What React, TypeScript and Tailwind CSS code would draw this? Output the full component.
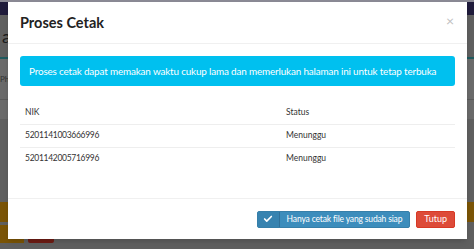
import { Check } from "lucide-react";

const rows = [
  { nik: "5201141003666996", status: "Menunggu" },
  { nik: "5201142005716996", status: "Menunggu" },
];

function BackgroundPage() {
  return (
    <div className="flex h-[249px] w-[474px] flex-col bg-[#5f5f5f]">
      <div className="h-[2px] bg-[#8a8994]" />
      <div className="h-[13px] bg-[#1f1b3b]" />
      <div className="flex h-[42px] items-center px-[2px] text-[18px] text-[#1c1c1c]">a</div>
      <div className="h-[2px] bg-[#1f5a5e]" />
      <div className="flex h-[60px] flex-col bg-[#6a6a6a]">
        <div className="flex h-[40px] items-center text-[8px] text-[#333]">Ph</div>
        <div className="h-px bg-[#5a5a5a]" />
      </div>
      <div className="flex-1" />
      <div className="flex h-[20px] bg-[#7a5406]" />
      <div className="h-[3px]" />
      <div className="flex h-[18px] gap-[4px]">
        <div className="w-[24px] bg-[#7a5406]" />
        <div className="w-[26px] rounded-[2px] bg-[#6e1c14]" />
      </div>
      <div className="h-[6px]" />
    </div>
  );
}

export default function App() {
  return (
    <div className="relative h-[249px] w-[474px] overflow-hidden" style={{ fontFamily: "Lato, 'Open Sans', sans-serif" }}>
      <BackgroundPage />
      <div className="absolute left-[8px] top-[2px] flex h-[237px] w-[459px] flex-col bg-white shadow-md">
        <div className="flex h-[42px] items-center justify-between border-b border-[#f0f0f0] pl-[12px] pr-[13px]">
          <h4 className="text-[14.5px] font-bold text-[#222]">Proses Cetak</h4>
          <span className="mt-[-4px] text-[14px] leading-none text-[#c0c0c0]">×</span>
        </div>
        <div className="flex-1 px-[12px] pt-[12px]">
          <div className="flex h-[30px] items-center whitespace-nowrap rounded-[3px] bg-[#00c0ef] px-[9px] text-[9.9px] tracking-[-0.15px] text-white">
            Proses cetak dapat memakan waktu cukup lama dan memerlukan halaman ini untuk tetap terbuka
          </div>
          <table className="mt-[15px] w-full text-[8.5px] text-[#333]">
            <thead>
              <tr className="h-[23px] border-b border-[#eee]">
                <th className="pl-[5px] text-left font-normal">NIK</th>
                <th className="w-[169px] text-left font-normal">Status</th>
              </tr>
            </thead>
            <tbody>
              {rows.map((r, i) => (
                <tr key={r.nik} className={`h-[23px] ${i === 0 ? "border-b border-[#eee]" : ""}`}>
                  <td className="pl-[5px] tracking-[-0.3px]">{r.nik}</td>
                  <td>{r.status}</td>
                </tr>
              ))}
            </tbody>
          </table>
        </div>
        <div className="flex h-[41px] items-center justify-end gap-[6px] border-t border-[#f0f0f0] pr-[12px]">
          <button className="flex h-[17px] items-stretch overflow-hidden rounded-[2px] border border-[#367fa9] bg-[#3c8dbc] text-[8.5px] tracking-[-0.15px] text-white">
            <span className="flex w-[22px] items-center justify-center border-r border-[#2f7099] bg-[#3783b0]">
              <Check size={10} strokeWidth={4} />
            </span>
            <span className="flex items-center px-[7px]">Hanya cetak file yang sudah siap</span>
          </button>
          <button className="flex h-[17px] items-center rounded-[2px] border border-[#d73925] bg-[#dd4b39] px-[7px] text-[9px] text-white">
            Tutup
          </button>
        </div>
      </div>
    </div>
  );
}
